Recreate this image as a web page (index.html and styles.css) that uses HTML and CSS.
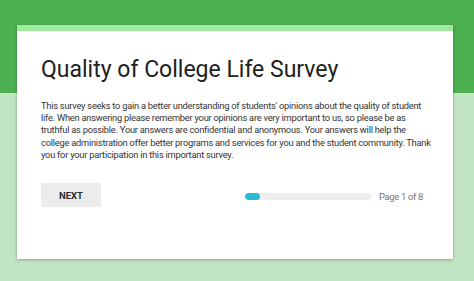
FILE: index.html
```html
<!DOCTYPE html>
<html>
<head>
<meta charset="utf-8">
<link rel="stylesheet" href="styles.css">
</head>
<body>
<div class="page">
  <div class="card">
    <h1 class="title">Quality of College Life Survey</h1>
    <p class="desc">This survey seeks to gain a better understanding of students' opinions about the quality of student life. When answering please remember your opinions are very important to us, so please be as truthful as possible. Your answers are confidential and anonymous. Your answers will help the college administration offer better programs and services for you and the student community. Thank you for your participation in this important survey.</p>
    <div class="nav">
      <button class="next">NEXT</button>
      <div class="progress-group">
        <div class="track"><div class="fill" style="width:15px"></div></div>
        <span class="page-label">Page 1 of 8</span>
      </div>
    </div>
  </div>
</div>
</body>
</html>
```

FILE: styles.css
```css
html, body {
  margin: 0;
  padding: 0;
}
body {
  font-family: Roboto, "Liberation Sans", sans-serif;
}
.page {
  width: 474px;
  height: 281px;
  background: linear-gradient(to bottom, #4caf50 0, #4caf50 93px, #c1e4c2 93px, #c1e4c2 100%);
  padding-top: 25px;
  box-sizing: border-box;
  overflow: hidden;
}
.card {
  margin-left: 17px;
  width: 436px;
  height: 234px;
  box-sizing: border-box;
  background: #fff;
  border-top: 6px solid #9fe89e;
  box-shadow: 0 1px 3px rgba(0,0,0,0.28);
  padding: 25px 20px 0 24px;
}
.title {
  margin: 0;
  font-weight: 400;
  font-size: 23px;
  line-height: 28px;
  color: #212121;
}
.desc {
  margin: 16px 0 0 0;
  font-size: 9.3px;
  letter-spacing: -0.24px;
  line-height: 12.2px;
  color: #333;
}
.nav {
  margin-top: 22px;
  display: flex;
  align-items: center;
  justify-content: space-between;
}
.next {
  width: 60px;
  height: 24px;
  border: none;
  border-radius: 1px;
  background: #ececec;
  font-family: Roboto, "Liberation Sans", sans-serif;
  font-weight: 700;
  font-size: 9.5px;
  color: #2a2a2a;
  padding: 0;
}
.progress-group {
  display: flex;
  align-items: center;
  gap: 8px;
  margin-right: 10px;
  margin-top: 2px;
}
.track {
  width: 126px;
  height: 7px;
  border-radius: 4px;
  background: #eeeeee;
  overflow: hidden;
}
.fill {
  height: 100%;
  border-radius: 4px;
  background: #27bcd4;
}
.page-label {
  font-size: 9.5px;
  letter-spacing: -0.35px;
  color: #777;
}
```
